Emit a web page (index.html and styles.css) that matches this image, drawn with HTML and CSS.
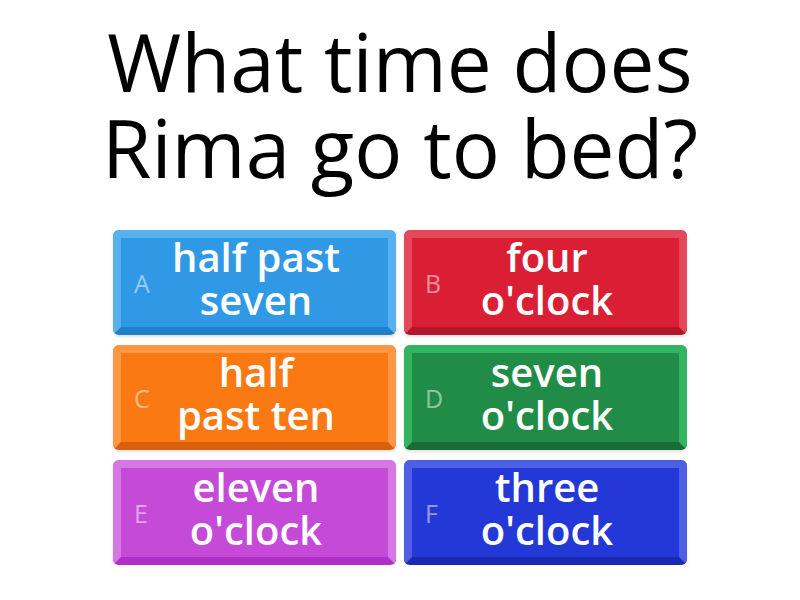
FILE: index.html
```html
<!DOCTYPE html>
<html lang="en">
<head>
    <meta charset="UTF-8">
    <meta name="viewport" content="width=device-width, initial-scale=1.0">
    <title>Quiz</title>
    <link rel="stylesheet" href="styles.css">
</head>
<body>
    <div class="quiz">
        <h1 class="question">What time does<br>Rima go to bed?</h1>
        <div class="answers">
            <button class="answer answer-a"><span class="key">A</span><span class="label">half past<br>seven</span></button>
            <button class="answer answer-b"><span class="key">B</span><span class="label">four<br>o'clock</span></button>
            <button class="answer answer-c"><span class="key">C</span><span class="label">half<br>past ten</span></button>
            <button class="answer answer-d"><span class="key">D</span><span class="label">seven<br>o'clock</span></button>
            <button class="answer answer-e"><span class="key">E</span><span class="label">eleven<br>o'clock</span></button>
            <button class="answer answer-f"><span class="key">F</span><span class="label">three<br>o'clock</span></button>
        </div>
    </div>
</body>
</html>
```

FILE: styles.css
```css
body {
    margin: 0;
    background: #fff;
    font-family: "Open Sans", "Liberation Sans", sans-serif;
}

.quiz {
    display: flex;
    flex-direction: column;
    align-items: center;
    padding-top: 18px;
}

.question {
    margin: 0 0 40px;
    font-size: 80px;
    font-weight: 400;
    line-height: 86px;
    text-align: center;
    color: #000;
}

.answers {
    display: grid;
    grid-template-columns: 283px 283px;
    column-gap: 8px;
    row-gap: 10px;
}

.answer {
    position: relative;
    box-sizing: border-box;
    height: 105px;
    padding: 0 0 9px 3px;
    display: flex;
    align-items: center;
    justify-content: center;
    border-style: solid;
    border-width: 8px;
    border-radius: 6px;
    box-shadow: 0 2px 3px rgba(0, 0, 0, 0.12);
    font-family: inherit;
    color: #fff;
    cursor: pointer;
}

.key {
    position: absolute;
    left: 13px;
    top: 50%;
    transform: translateY(-50%);
    font-size: 25px;
    font-weight: 400;
    color: rgba(255, 255, 255, 0.5);
}

.label {
    font-size: 40px;
    font-weight: 600;
    line-height: 43px;
    text-align: center;
}

.answer-a {
    background: #2f99e5;
    border-color: #58b1ee #58b1ee #1f7fca #58b1ee;
}

.answer-b {
    background: #da1f35;
    border-color: #e4495b #e4495b #b5172a #e4495b;
}

.answer-c {
    background: #fb7913;
    border-color: #fd9746 #fd9746 #d9600a #fd9746;
}

.answer-d {
    background: #218c47;
    border-color: #33b461 #33b461 #196c36 #33b461;
}

.answer-e {
    background: #c54ad8;
    border-color: #d678e3 #d678e3 #b02fc9 #d678e3;
}

.answer-f {
    background: #2438d8;
    border-color: #4e5fe6 #4e5fe6 #1a29b2 #4e5fe6;
}
```
